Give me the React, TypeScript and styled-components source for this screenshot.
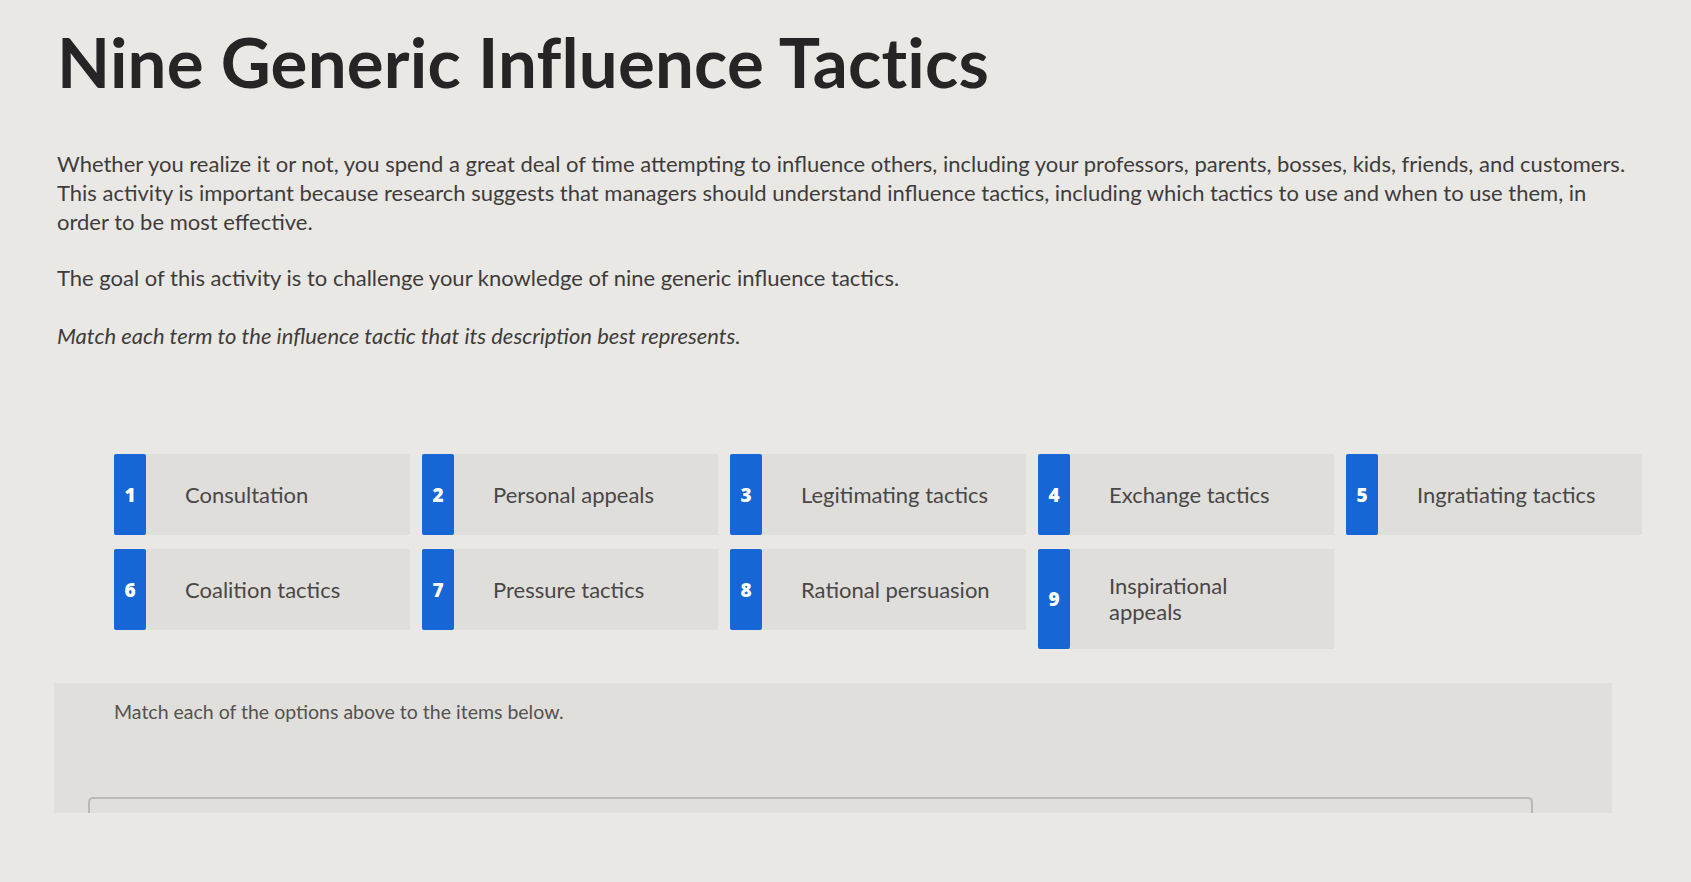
import React from "react";
import styled, { createGlobalStyle } from "styled-components";

const GlobalStyle = createGlobalStyle`
  html, body {
    margin: 0;
    padding: 0;
    background: #e9e8e4;
  }
  body {
    font-family: Lato, "Open Sans", "Liberation Sans", sans-serif;
    color: #3d3b3b;
  }
`;

const Page = styled.main`
  min-height: 882px;
  box-sizing: border-box;
  padding: 22px 0 0 0;
  display: flex;
  flex-direction: column;
`;

const Intro = styled.section`
  padding: 0 40px 0 57px;
  display: flex;
  flex-direction: column;
`;

const Title = styled.h1`
  margin: 0;
  font-size: 69px;
  line-height: 80px;
  font-weight: 700;
  color: #262424;
  letter-spacing: 0.2px;
`;

const Paragraph = styled.p<{ $gap: number; $italic?: boolean }>`
  margin: ${(p) => p.$gap}px 0 0 0;
  font-size: 22px;
  line-height: 29px;
  color: #3e3c3c;
  font-style: ${(p) => (p.$italic ? "italic" : "normal")};
  max-width: 1575px;
`;

const CardGrid = styled.div`
  display: grid;
  grid-template-columns: repeat(5, 296px);
  column-gap: 12px;
  row-gap: 14px;
  align-items: start;
  margin: 104px 0 0 114px;
`;

const Card = styled.div`
  display: flex;
  min-height: 81px;
  background: #dfdedb;
`;

const Tab = styled.div`
  flex: 0 0 32px;
  background: #1766d6;
  border-radius: 2px;
  display: flex;
  align-items: center;
  justify-content: center;
  color: #ffffff;
  font-family: "Open Sans", Lato, sans-serif;
  font-weight: 800;
  font-size: 19px;
`;

const Label = styled.div`
  display: flex;
  align-items: center;
  padding: 24px 16px 24px 39px;
  font-size: 22px;
  line-height: 26px;
  color: #4a4747;
`;

const LabelText = styled.span`
  max-width: 193px;
`;

const Panel = styled.section`
  margin: 34px 79px 0 54px;
  background: #e0dfdc;
  padding: 18px 0 0 0;
  display: flex;
  flex-direction: column;
`;

const PanelText = styled.div`
  margin-left: 60px;
  font-size: 19.5px;
  line-height: 22px;
  color: #55524f;
`;

const DropEdge = styled.div`
  margin: 74px 79px 0 34px;
  height: 14px;
  border: 2px solid #b9b8b5;
  border-bottom: none;
  border-radius: 5px 5px 0 0;
`;

const tactics = [
  "Consultation",
  "Personal appeals",
  "Legitimating tactics",
  "Exchange tactics",
  "Ingratiating tactics",
  "Coalition tactics",
  "Pressure tactics",
  "Rational persuasion",
  "Inspirational appeals",
];

export default function App() {
  return (
    <>
      <GlobalStyle />
      <Page>
        <Intro>
          <Title>Nine Generic Influence Tactics</Title>
          <Paragraph $gap={47}>
            Whether you realize it or not, you spend a great deal of time attempting to influence others,
            including your professors, parents, bosses, kids, friends, and customers. This activity is
            important because research suggests that managers should understand influence tactics, including
            which tactics to use and when to use them, in order to be most effective.
          </Paragraph>
          <Paragraph $gap={27}>
            The goal of this activity is to challenge your knowledge of nine generic influence tactics.
          </Paragraph>
          <Paragraph $gap={29} $italic>
            Match each term to the influence tactic that its description best represents.
          </Paragraph>
        </Intro>
        <CardGrid>
          {tactics.map((t, i) => (
            <Card key={t}>
              <Tab>{i + 1}</Tab>
              <Label>
                <LabelText>{t}</LabelText>
              </Label>
            </Card>
          ))}
        </CardGrid>
        <Panel>
          <PanelText>Match each of the options above to the items below.</PanelText>
          <DropEdge />
        </Panel>
      </Page>
    </>
  );
}
